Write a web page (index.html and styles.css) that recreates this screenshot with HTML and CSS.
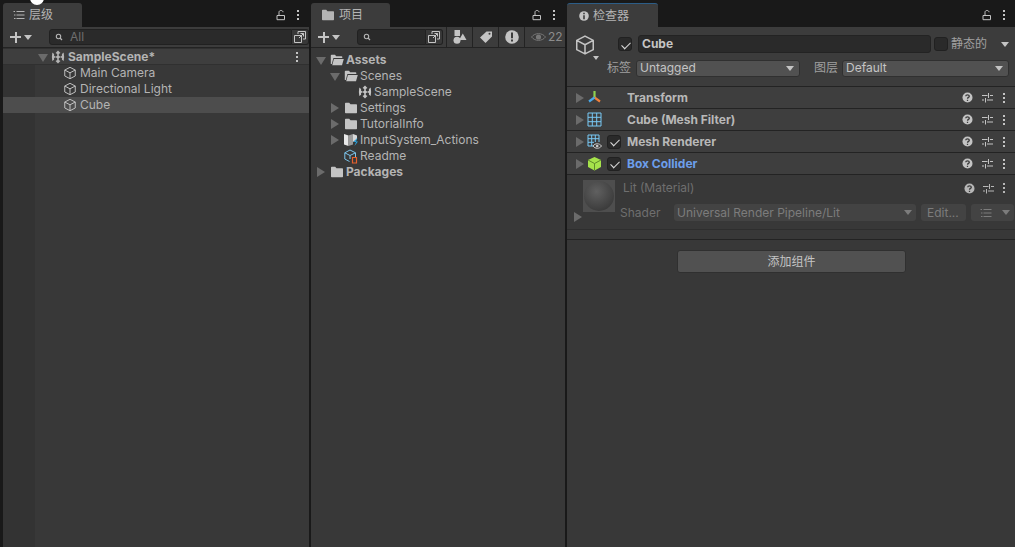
FILE: index.html
```html
<!DOCTYPE html>
<html lang="en">
<head>
    <meta charset="UTF-8">
    <meta name="viewport" content="width=device-width, initial-scale=1.0">
    <title>Unity Editor</title>
    <link rel="stylesheet" href="styles.css">
</head>
<body>
    <svg class="defs" width="0" height="0">
        <symbol id="cube" viewBox="0 0 16 16"><path d="M8 1.5 14 4.6V11.4L8 14.5 2 11.4V4.6ZM2 4.6 8 7.8 14 4.6M8 7.8V14.5" fill="none" stroke="currentColor" stroke-width="1.1" stroke-linejoin="round"/></symbol>
        <symbol id="unity" viewBox="0 0 16 16"><path d="M8 .5 10.8 3.4 8.9 4.5 8.9 6.6 10.7 7.6 12.5 6.6 12.5 4.5 14.5 2.8 15 8 15 8 14.5 12.5 12.5 11 12.5 9.2 10.7 8.4 8.9 9.4V11.5L10.8 12.6 8 15.5 5.2 12.6 7.1 11.5V9.4L5.3 8.4 3.5 9.2V11L1.500 12.500 1 8 1.500 2.800 3.500 4.500V6.600L5.300 7.600 7.100 6.600V4.500L5.200 3.400Z" fill="currentColor"/></symbol>
        <symbol id="folder" viewBox="0 0 14 12"><path d="M1 1.500C1 1 1.300.7 1.800.7H5.200L6.500 2.200H12.300C12.800 2.200 13 2.500 13 3V10.500C13 11 12.800 11.200 12.300 11.200H1.800C1.300 11.200 1 11 1 10.500Z" fill="currentColor"/></symbol>
        <symbol id="folder-open" viewBox="0 0 14 12"><path d="M.8 1.500C.8 1 1.100.7 1.600.7H5L6.200 2.200H11.600C12 2.200 12.300 2.500 12.300 3V4H3.400L1.800 10H.8ZM3.900 5H13.800L12 11.200H2.200Z" fill="currentColor"/></symbol>
        <symbol id="lock" viewBox="0 0 10 12"><path d="M1 6.500H8.500V10.700H1ZM3 6.500V3.200C3 .9 7 .9 7 3.200" fill="none" stroke="currentColor" stroke-width="1"/></symbol>
        <symbol id="dots" viewBox="0 0 4 12"><path d="M1 1h2v2H1ZM1 5h2v2H1ZM1 9h2v2H1Z" fill="currentColor"/></symbol>
        <symbol id="help" viewBox="0 0 11 11"><circle cx="5.500" cy="5.500" r="5" fill="currentColor"/><path d="M3.700 4.300C3.800 2.500 7.300 2.500 7.300 4.300 7.300 5.500 5.500 5.300 5.500 6.700M5.500 7.700V8.900" fill="none" stroke="#3c3c3c" stroke-width="1.300"/></symbol>
        <symbol id="sliders" viewBox="0 0 11 11"><path d="M0 3.500H5.500M8 3.500H11M6.500 1V6M0 8H2M5 8H11M3.500 6V10.500" fill="none" stroke="currentColor" stroke-width="1"/></symbol>
        <symbol id="search" viewBox="0 0 12 8"><circle cx="3.500" cy="3.500" r="2.200" fill="none" stroke="currentColor" stroke-width="1.100"/><path d="M5 5 7 7" stroke="currentColor" stroke-width="1.200"/></symbol>
        <symbol id="pop" viewBox="0 0 14 14"><path d="M5 4V1.500H12.500V9H10M1.500 5.500H8.500V12.500H1.500ZM6 8 10.500 3.500M7.500 3.500H10.500V6.500" fill="none" stroke="currentColor" stroke-width="1"/></symbol>
        <symbol id="grid" viewBox="0 0 15 15"><path d="M1 1H14V14H1ZM5.300 1V14M9.700 1V14M1 5.300H14M1 9.700H14" fill="none" stroke="#79c9f5" stroke-width="1"/></symbol>
        <symbol id="list" viewBox="0 0 12 10"><path d="M3.500 1.500H11.500M3.500 5H11.500M3.500 8.500H11.500M.5 1.500H2M1 5H2.500M1 8.500H2.500" fill="none" stroke="currentColor" stroke-width="1"/></symbol>
    </svg>

    <div class="dot"></div>

    <div class="editor">
        <section class="panel hierarchy">
            <div class="tabbar">
                <div class="tab">
                    <svg class="tab-icon" width="12" height="10"><use href="#list"/></svg>
                    <span>层级</span>
                </div>
                <div class="tab-actions">
                    <svg width="10" height="12"><use href="#lock"/></svg>
                    <svg width="4" height="12"><use href="#dots"/></svg>
                </div>
            </div>
            <div class="toolbar">
                <div class="add"><span class="plus"></span><span class="caret"></span></div>
                <div class="search wide">
                    <svg width="12" height="8"><use href="#search"/></svg>
                    <span class="hint">All</span>
                </div>
                <div class="pop"><svg width="14" height="14"><use href="#pop"/></svg></div>
            </div>
            <div class="tree">
                <div class="scene-row">
                    <span class="arrow down"></span>
                    <svg width="14" height="14"><use href="#unity"/></svg>
                    <span class="bold">SampleScene*</span>
                    <svg class="row-dots" width="4" height="12"><use href="#dots"/></svg>
                </div>
                <div class="obj-row"><svg width="14" height="14"><use href="#cube"/></svg><span>Main Camera</span></div>
                <div class="obj-row"><svg width="14" height="14"><use href="#cube"/></svg><span>Directional Light</span></div>
                <div class="obj-row selected"><svg width="14" height="14"><use href="#cube"/></svg><span>Cube</span></div>
            </div>
        </section>

        <section class="panel project">
            <div class="tabbar">
                <div class="tab">
                    <svg class="tab-icon" width="14" height="12"><use href="#folder"/></svg>
                    <span>项目</span>
                </div>
                <div class="tab-actions">
                    <svg width="10" height="12"><use href="#lock"/></svg>
                    <svg width="4" height="12"><use href="#dots"/></svg>
                </div>
            </div>
            <div class="toolbar">
                <div class="add"><span class="plus"></span><span class="caret"></span></div>
                <div class="search short">
                    <svg width="12" height="8"><use href="#search"/></svg>
                </div>
                <div class="pop"><svg width="14" height="14"><use href="#pop"/></svg></div>
                <div class="tool-btn">
                    <svg width="14" height="14" viewBox="0 0 14 14"><path d="M1.500 0H7V6H1.500Z" fill="#c4c4c4"/><circle cx="4" cy="10.200" r="3.500" fill="#c4c4c4"/><path d="M9.800 3.500 13.500 10H6Z" fill="#c4c4c4"/></svg>
                </div>
                <div class="tool-btn">
                    <svg width="14" height="14" viewBox="0 0 14 14"><path d="M1 7.500 7.500 1.500H13V6.500L6.500 13Z" fill="#c4c4c4"/><circle cx="10.500" cy="3.800" r="1" fill="#3c3c3c"/></svg>
                </div>
                <div class="tool-btn">
                    <svg width="14" height="14" viewBox="0 0 14 14"><circle cx="7" cy="7" r="6.800" fill="#c4c4c4"/><path d="M6 2.500H8V8.300H6ZM6 9.500H8V11.500H6Z" fill="#3c3c3c"/></svg>
                </div>
                <div class="eye-count">
                    <svg width="15" height="10" viewBox="0 0 15 10"><path d="M.5 5C4 .5 11 .5 14.500 5 11 9.500 4 9.500 .5 5Z" fill="none" stroke="#777" stroke-width="1"/><circle cx="7.500" cy="5" r="2.600" fill="#777"/></svg>
                    <span>22</span>
                </div>
            </div>
            <div class="tree files">
                <div class="file-row level0"><span class="arrow down"></span><svg width="14" height="12"><use href="#folder-open"/></svg><span class="bold">Assets</span></div>
                <div class="file-row level1"><span class="arrow down"></span><svg width="14" height="12"><use href="#folder-open"/></svg><span>Scenes</span></div>
                <div class="file-row level2"><span class="arrow none"></span><svg width="14" height="14"><use href="#unity"/></svg><span>SampleScene</span></div>
                <div class="file-row level1"><span class="arrow right"></span><svg width="14" height="12"><use href="#folder"/></svg><span>Settings</span></div>
                <div class="file-row level1"><span class="arrow right"></span><svg width="14" height="12"><use href="#folder"/></svg><span>TutorialInfo</span></div>
                <div class="file-row level1">
                    <span class="arrow right"></span>
                    <svg width="14" height="14" viewBox="0 0 14 14"><path d="M0 1 4.500 2.500V13L0 11.500Z" fill="#e8e8e8"/><path d="M4.500 2.500 9 1V11.500L4.500 13Z" fill="#9a9a9a"/><path d="M9 1 13 2.500V6L9 9Z" fill="#d8d8d8"/><path d="M13.500 4.500 9.500 9H12L10.500 13 14 8.500H12Z" fill="#2aa5e0"/></svg>
                    <span>InputSystem_Actions</span>
                </div>
                <div class="file-row level1">
                    <span class="arrow none"></span>
                    <svg width="14" height="15" viewBox="0 0 14 15"><path d="M6 1 11.500 3.800V8M6 1 .8 3.800V10L5.500 12.500M.8 3.800 6 6.500 11.500 3.800M6 6.500V10" fill="none" stroke="#7cc5ec" stroke-width="1"/><path d="M8.500 8.500H12.500V14H8.500Z" fill="none" stroke="#e8602c" stroke-width="1.200"/></svg>
                    <span>Readme</span>
                </div>
                <div class="file-row level0"><span class="arrow right"></span><svg width="14" height="12"><use href="#folder"/></svg><span class="bold">Packages</span></div>
            </div>
        </section>

        <section class="panel inspector">
            <div class="tabbar">
                <div class="tab active">
                    <svg class="tab-icon" width="10" height="10" viewBox="0 0 10 10"><circle cx="5" cy="5" r="4.800" fill="#c4c4c4"/><path d="M4.200 1.800H5.800V3.200H4.200ZM4.200 4.200H5.800V8.200H4.200Z" fill="#3c3c3c"/></svg>
                    <span>检查器</span>
                </div>
                <div class="tab-actions">
                    <svg width="10" height="12"><use href="#lock"/></svg>
                    <svg width="4" height="12"><use href="#dots"/></svg>
                </div>
            </div>

            <div class="obj-header">
                <div class="obj-icon">
                    <svg width="22" height="22"><use href="#cube"/></svg>
                    <span class="caret small"></span>
                </div>
                <div class="obj-fields">
                    <div class="field-line">
                        <span class="check on"></span>
                        <div class="name-input">Cube</div>
                        <span class="check"></span>
                        <span class="static-label">静态的</span>
                        <span class="caret static-caret"></span>
                    </div>
                    <div class="field-line">
                        <span class="field-label">标签</span>
                        <div class="dropdown tag">Untagged<span class="caret"></span></div>
                        <span class="field-label layer-label">图层</span>
                        <div class="dropdown layer">Default<span class="caret"></span></div>
                    </div>
                </div>
            </div>

            <div class="comp-row">
                <span class="arrow right"></span>
                <svg class="comp-icon" width="15" height="15" viewBox="0 0 15 15"><path d="M7.500 7.500V1" stroke="#8fd14f" stroke-width="2.200"/><path d="M7.500 7.500 13 11.500" stroke="#f0803c" stroke-width="2.200"/><path d="M7.500 7.500 2 11.500" stroke="#4aa8e8" stroke-width="2.200"/></svg>
                <span class="comp-check"></span>
                <span class="comp-name">Transform</span>
                <div class="comp-actions">
                    <svg width="11" height="11"><use href="#help"/></svg>
                    <svg width="11" height="11"><use href="#sliders"/></svg>
                    <svg width="4" height="12"><use href="#dots"/></svg>
                </div>
            </div>
            <div class="comp-row">
                <span class="arrow right"></span>
                <svg class="comp-icon" width="15" height="15"><use href="#grid"/></svg>
                <span class="comp-check"></span>
                <span class="comp-name">Cube (Mesh Filter)</span>
                <div class="comp-actions">
                    <svg width="11" height="11"><use href="#help"/></svg>
                    <svg width="11" height="11"><use href="#sliders"/></svg>
                    <svg width="4" height="12"><use href="#dots"/></svg>
                </div>
            </div>
            <div class="comp-row">
                <span class="arrow right"></span>
                <svg class="comp-icon" width="15" height="15" viewBox="0 0 15 15"><path d="M1 1H12V8M1 1V12H6M4.700 1V12M8.300 1V8M1 4.700H12M1 8.300H7" fill="none" stroke="#79c9f5" stroke-width="1"/><path d="M6 12C8 9 12.500 9 14.500 12 12.500 15 8 15 6 12Z" fill="#3c3c3c" stroke="#ccc" stroke-width="1"/><circle cx="10.200" cy="12" r="1.300" fill="#ccc"/></svg>
                <span class="comp-check on"></span>
                <span class="comp-name">Mesh Renderer</span>
                <div class="comp-actions">
                    <svg width="11" height="11"><use href="#help"/></svg>
                    <svg width="11" height="11"><use href="#sliders"/></svg>
                    <svg width="4" height="12"><use href="#dots"/></svg>
                </div>
            </div>
            <div class="comp-row">
                <span class="arrow right"></span>
                <svg class="comp-icon" width="15" height="15" viewBox="0 0 15 15"><path d="M7.500 1 14 4V11L7.500 14.500 1 11V4Z" fill="#a6e34b"/><path d="M1 4 7.500 7.500 14 4M7.500 7.500V14.500" fill="none" stroke="#5f8a2a" stroke-width="1"/></svg>
                <span class="comp-check on"></span>
                <span class="comp-name blue">Box Collider</span>
                <div class="comp-actions">
                    <svg width="11" height="11"><use href="#help"/></svg>
                    <svg width="11" height="11"><use href="#sliders"/></svg>
                    <svg width="4" height="12"><use href="#dots"/></svg>
                </div>
            </div>

            <div class="material">
                <div class="mat-thumb"><div class="sphere"></div></div>
                <span class="arrow right mat-arrow"></span>
                <div class="mat-body">
                    <div class="mat-title">
                        <span>Lit (Material)</span>
                        <div class="comp-actions">
                            <svg width="11" height="11"><use href="#help"/></svg>
                            <svg width="11" height="11"><use href="#sliders"/></svg>
                            <svg width="4" height="12"><use href="#dots"/></svg>
                        </div>
                    </div>
                    <div class="mat-shader">
                        <span class="shader-label">Shader</span>
                        <div class="dim-drop shader">Universal Render Pipeline/Lit<span class="caret"></span></div>
                        <div class="dim-drop edit">Edit...</div>
                        <div class="dim-drop lines"><svg width="12" height="10"><use href="#list"/></svg><span class="caret"></span></div>
                    </div>
                </div>
            </div>

            <div class="add-area">
                <div class="add-btn">添加组件</div>
            </div>
        </section>
    </div>
</body>
</html>
```

FILE: styles.css
```css
* {
    box-sizing: border-box;
}
html, body {
    height: 100%;
}
body {
    margin: 0;
    background: #191919;
    color: #b4b4b4;
    font-family: Inter, 'Noto Sans CJK SC', sans-serif;
    font-size: 12px;
    line-height: 16px;
    overflow: hidden;
}
.defs {
    position: absolute;
}
.dot {
    position: absolute;
    left: 30px;
    top: -9px;
    width: 14px;
    height: 14px;
    border-radius: 50%;
    background: #fff;
}
.editor {
    display: flex;
    gap: 2px;
    height: 100%;
    padding-top: 3px;
}
.panel {
    display: flex;
    flex-direction: column;
    background: #383838;
}
.hierarchy {
    width: 306px;
    margin-left: 3px;
}
.project {
    width: 254px;
}
.inspector {
    flex: 1;
    background: #383838;
}

/* tabs */
.tabbar {
    display: flex;
    justify-content: space-between;
    height: 24px;
    background: #191919;
}
.tab {
    display: flex;
    align-items: center;
    gap: 4px;
    padding-left: 10px;
    width: 79px;
    background: #3c3c3c;
    border-radius: 3px 3px 0 0;
    color: #b4b4b4;
}
.hierarchy .tab {
    padding-left: 10px;
}
.project .tab {
    padding-left: 10px;
}
.tab.active {
    width: 91px;
    padding-left: 12px;
    border-top: 1px solid #2c5d87;
}
.tab-actions {
    display: flex;
    align-items: center;
    gap: 10px;
    padding-right: 9px;
    height: 24px;
    color: #c4c4c4;
}

/* toolbar */
.toolbar {
    display: flex;
    align-items: center;
    height: 21px;
    background: #3c3c3c;
    border-bottom: 1px solid #232323;
    padding-left: 7px;
    flex-shrink: 0;
}
.add {
    display: flex;
    align-items: center;
    gap: 3px;
    width: 36px;
}
.plus {
    position: relative;
    width: 11px;
    height: 11px;
    background:
        linear-gradient(#c4c4c4, #c4c4c4) center / 100% 2px no-repeat,
        linear-gradient(#c4c4c4, #c4c4c4) center / 2px 100% no-repeat;
}
.caret {
    display: inline-block;
    width: 0;
    height: 0;
    border-left: 4px solid transparent;
    border-right: 4px solid transparent;
    border-top: 5px solid #c4c4c4;
}
.caret.small {
    border-left-width: 3.5px;
    border-right-width: 3.5px;
    border-top-width: 4px;
}
.search {
    display: flex;
    align-items: center;
    gap: 1px;
    height: 16px;
    padding-left: 5px;
    background: #2a2a2a;
    border: 1px solid #212121;
    border-radius: 3px 0 0 3px;
    color: #b4b4b4;
}
.search.wide {
    width: 243px;
    margin-left: 3px;
}
.search.short {
    width: 69px;
    margin-left: 3px;
}
.hint {
    color: #6e6e6e;
    margin-left: 2px;
}
.pop {
    display: flex;
    align-items: center;
    justify-content: center;
    width: 17px;
    height: 16px;
    background: #383838;
    border: 1px solid #212121;
    border-left: 0;
    border-radius: 0 3px 3px 0;
    color: #c4c4c4;
}
.tool-btn {
    display: flex;
    align-items: center;
    justify-content: center;
    width: 26px;
    height: 20px;
    border-left: 1px solid #232323;
}
.tool-btn:first-of-type {
    margin-left: 3px;
}
.project .pop + .tool-btn {
    margin-left: 3px;
}
.eye-count {
    display: flex;
    align-items: center;
    gap: 2px;
    flex: 1;
    height: 20px;
    padding-left: 6px;
    border-left: 1px solid #232323;
    color: #8c8c8c;
}

/* trees */
.tree {
    flex: 1;
}
.hierarchy .tree {
    background: linear-gradient(90deg, #333 32px, #383838 32px);
}
.arrow {
    display: inline-block;
    flex-shrink: 0;
    width: 12px;
    height: 12px;
    position: relative;
}
.arrow::after {
    content: "";
    position: absolute;
}
.arrow.down::after {
    left: 1px;
    top: 3px;
    border-left: 5px solid transparent;
    border-right: 5px solid transparent;
    border-top: 8px solid #6b6b6b;
}
.arrow.right::after {
    left: 2px;
    top: 1px;
    border-top: 5px solid transparent;
    border-bottom: 5px solid transparent;
    border-left: 8px solid #6b6b6b;
}
.bold {
    font-weight: 700;
}
.scene-row {
    display: flex;
    align-items: center;
    gap: 2px;
    height: 17px;
    padding-left: 34px;
    background: #3e3e3e;
    border-top: 1px solid #303030;
    border-bottom: 1px solid #303030;
}
.scene-row .bold {
    margin-left: 1px;
}
.row-dots {
    margin-left: auto;
    margin-right: 10px;
    color: #c4c4c4;
}
.obj-row {
    display: flex;
    align-items: center;
    gap: 3px;
    height: 16px;
    padding-left: 60px;
}
.obj-row svg {
    color: #c4c4c4;
}
.selected {
    background: #4d4d4d;
}
.files {
    padding-top: 4px;
}
.file-row {
    display: flex;
    align-items: center;
    height: 16px;
}
.file-row svg {
    flex-shrink: 0;
    margin: 0 2px 0 3px;
    color: #c4c4c4;
}
.level0 {
    padding-left: 4px;
}
.level1 {
    padding-left: 18px;
}
.level2 {
    padding-left: 32px;
}

/* inspector header */
.obj-header {
    display: flex;
    height: 60px;
    flex-shrink: 0;
    background: #3c3c3c;
    border-bottom: 1px solid #232323;
    padding: 7px 0 0 7px;
}
.obj-icon {
    position: relative;
    width: 33px;
    color: #c4c4c4;
}
.obj-icon .caret {
    position: absolute;
    left: 19px;
    top: 22px;
}
.field-line {
    display: flex;
    align-items: center;
    height: 20px;
    margin-bottom: 4px;
}
.obj-fields {
    flex: 1;
    padding-right: 6px;
}
.check {
    display: inline-block;
    flex-shrink: 0;
    width: 14px;
    height: 14px;
    background: #2a2a2a;
    border: 1px solid #212121;
    border-radius: 3px;
    position: relative;
}
.check.on::after, .comp-check.on::after {
    content: "";
    position: absolute;
    left: 3px;
    top: 1.500px;
    width: 7px;
    height: 4px;
    border-left: 1.500px solid #d8d8d8;
    border-bottom: 1.500px solid #d8d8d8;
    transform: translateY(2px) rotate(-45deg) scaleX(1.100);
}
.field-line > .check.on {
    margin-left: 11px;
}
.name-input {
    width: 293px;
    height: 18px;
    margin: 0 3px 0 6px;
    padding-left: 3px;
    background: #2a2a2a;
    border: 1px solid #232323;
    border-radius: 3px;
    font-weight: 700;
    line-height: 16px;
    color: #c4c4c4;
}
.static-label {
    margin-left: 3px;
    color: #a0a0a0;
}
.static-caret {
    margin-left: auto;
    margin-right: 0;
}
.field-label {
    color: #a0a0a0;
    flex-shrink: 0;
}
.dropdown {
    display: flex;
    align-items: center;
    justify-content: space-between;
    height: 17px;
    padding: 0 5px 0 3px;
    background: #515151;
    border: 1px solid #303030;
    border-radius: 3px;
    color: #c4c4c4;
}
.dropdown.tag {
    width: 164px;
    margin-left: 5px;
}
.layer-label {
    margin-left: 14px;
}
.dropdown.layer {
    width: 167px;
    margin-left: 4px;
}

/* components */
.comp-row {
    display: flex;
    align-items: center;
    flex-shrink: 0;
    height: 22px;
    padding-left: 7px;
    background: #3e3e3e;
    border-bottom: 1px solid #232323;
}
.comp-icon {
    margin-left: 1px;
    flex-shrink: 0;
    margin-left: 1px;
}
.comp-check {
    position: relative;
    flex-shrink: 0;
    width: 14px;
    height: 14px;
    margin: 0 6px 0 5px;
    border-radius: 3px;
}
.comp-check.on {
    background: #2a2a2a;
    border: 1px solid #212121;
}
.comp-name {
    font-weight: 700;
    color: #b8b8b8;
}
.comp-name.blue {
    color: #6d9eeb;
}
.comp-actions {
    display: flex;
    align-items: center;
    gap: 9px;
    margin-left: auto;
    padding-right: 9px;
    color: #c4c4c4;
}

/* material */
.material {
    position: relative;
    display: flex;
    flex-shrink: 0;
    height: 55px;
    padding: 5px 0 0 16px;
    background: #383838;
    border-bottom: 1px solid #2e2e2e;
}
.mat-thumb {
    width: 32px;
    height: 32px;
    flex-shrink: 0;
    padding: 1px;
    background: #4e4e4e;
}
.sphere {
    width: 30px;
    height: 30px;
    border-radius: 50%;
    background: radial-gradient(circle at 42% 35%, #606060, #3e3e3e 70%, #2e2e2e);
}
.mat-arrow {
    position: absolute;
    left: 5px;
    top: 36px;
}
.mat-body {
    flex: 1;
    padding-left: 8px;
    min-width: 0;
}
.mat-title {
    display: flex;
    align-items: center;
    height: 16px;
    margin-top: 0;
    color: #6f6f6f;
}
.mat-title .comp-actions {
    opacity: 0.9;
    padding-right: 9px;
    gap: 8px;
}
.mat-shader {
    display: flex;
    align-items: center;
    margin-top: 8px;
    margin-left: -3px;
}
.shader-label {
    width: 54px;
    flex-shrink: 0;
    color: #6f6f6f;
}
.dim-drop {
    display: flex;
    align-items: center;
    justify-content: space-between;
    height: 17px;
    background: #434343;
    border-radius: 3px;
    padding: 0 4px 0 3px;
    color: #7c7c7c;
}
.dim-drop .caret {
    border-top-color: #7c7c7c;
}
.dim-drop svg {
    color: #7c7c7c;
    margin-left: 6px;
}
.shader {
    width: 242px;
}
.edit {
    width: 45px;
    margin-left: 5px;
    padding-left: 6px;
}
.lines {
    width: 43px;
    margin-left: 5px;
}
.add-area {
    flex: 1;
    margin-top: 9px;
    padding-top: 10px;
    background: #383838;
    border-top: 1px solid #232323;
}
.add-btn {
    width: 229px;
    height: 23px;
    margin-left: 110px;
    background: #515151;
    border: 1px solid #303030;
    border-radius: 3px;
    text-align: center;
    line-height: 21px;
    color: #c4c4c4;
}
```
